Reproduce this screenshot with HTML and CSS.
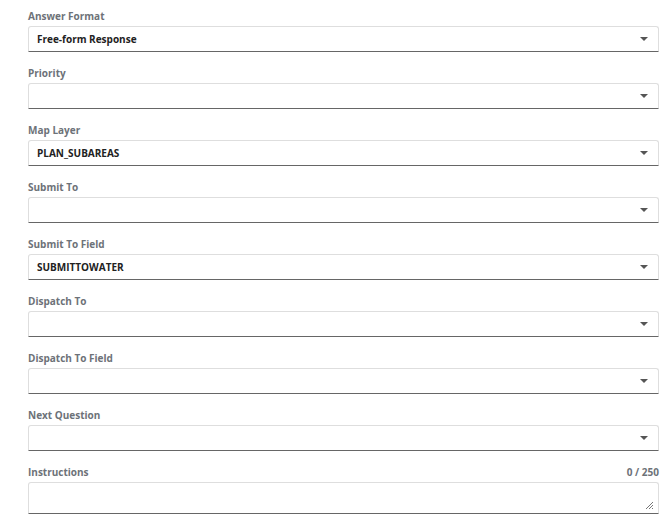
FILE: index.html
```html
<!DOCTYPE html>
<html>
<head>
<meta charset="utf-8">
<link rel="stylesheet" href="styles.css">
</head>
<body>
<div class="form">
  <div class="field">
    <div class="label">Answer Format</div>
    <div class="select"><span class="value">Free-form Response</span><span class="arrow"></span></div>
  </div>
  <div class="field">
    <div class="label">Priority</div>
    <div class="select"><span class="value"></span><span class="arrow"></span></div>
  </div>
  <div class="field">
    <div class="label">Map Layer</div>
    <div class="select"><span class="value">PLAN_SUBAREAS</span><span class="arrow"></span></div>
  </div>
  <div class="field">
    <div class="label">Submit To</div>
    <div class="select"><span class="value"></span><span class="arrow"></span></div>
  </div>
  <div class="field">
    <div class="label">Submit To Field</div>
    <div class="select"><span class="value">SUBMITTOWATER</span><span class="arrow"></span></div>
  </div>
  <div class="field">
    <div class="label">Dispatch To</div>
    <div class="select"><span class="value"></span><span class="arrow"></span></div>
  </div>
  <div class="field">
    <div class="label">Dispatch To Field</div>
    <div class="select"><span class="value"></span><span class="arrow"></span></div>
  </div>
  <div class="field">
    <div class="label">Next Question</div>
    <div class="select"><span class="value"></span><span class="arrow"></span></div>
  </div>
  <div class="field">
    <div class="label-row"><span class="label">Instructions</span><span class="counter">0 / 250</span></div>
    <div class="textarea">
      <svg class="grip" width="9" height="9" viewBox="0 0 9 9"><path d="M8 1L1 8M8 4L4 8M8 7L7 8" stroke="#777" stroke-width="1" fill="none"/></svg>
    </div>
  </div>
</div>
</body>
</html>
```
FILE: styles.css
```css
html, body {
  margin: 0;
  padding: 0;
  background: #ffffff;
}
body {
  font-family: "Open Sans", "Noto Sans", sans-serif;
}
.form {
  display: flex;
  flex-direction: column;
  padding: 8px 5px 0 28px;
}
.field {
  display: flex;
  flex-direction: column;
  margin-bottom: 13px;
}
.label {
  font-size: 10px;
  font-weight: 700;
  color: #6d7278;
  line-height: 16px;
}
.label-row {
  display: flex;
  justify-content: space-between;
  align-items: center;
}
.counter {
  font-size: 10px;
  font-weight: 700;
  color: #6d7278;
  line-height: 16px;
}
.select {
  margin-top: 2px;
  box-sizing: border-box;
  height: 26px;
  border: 1px solid #dedede;
  border-bottom: 1px solid #666;
  border-radius: 3px 3px 0 0;
  display: flex;
  align-items: center;
  justify-content: space-between;
  padding: 0 10px 0 8px;
}
.value {
  font-size: 10px;
  font-weight: 700;
  color: #222;
}
.arrow {
  width: 0;
  height: 0;
  border-left: 4px solid transparent;
  border-right: 4px solid transparent;
  border-top: 4px solid #555;
}
.textarea {
  margin-top: 2px;
  height: 32px;
  box-sizing: border-box;
  border: 1px solid #dedede;
  border-bottom: 1px solid #666;
  border-radius: 3px 3px 0 0;
  display: flex;
  justify-content: flex-end;
  align-items: flex-end;
  padding: 0 4px 3px 0;
}
.grip {
  display: block;
}
```
